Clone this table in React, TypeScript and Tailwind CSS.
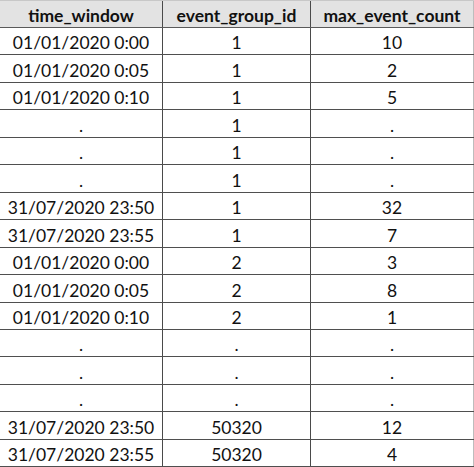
import React from 'react';

type Row = [string, string, string];

const rows: Row[] = [
  ['01/01/2020 0:00', '1', '10'],
  ['01/01/2020 0:05', '1', '2'],
  ['01/01/2020 0:10', '1', '5'],
  ['.', '1', '.'],
  ['.', '1', '.'],
  ['.', '1', '.'],
  ['31/07/2020 23:50', '1', '32'],
  ['31/07/2020 23:55', '1', '7'],
  ['01/01/2020 0:00', '2', '3'],
  ['01/01/2020 0:05', '2', '8'],
  ['01/01/2020 0:10', '2', '1'],
  ['.', '.', '.'],
  ['.', '.', '.'],
  ['.', '.', '.'],
  ['31/07/2020 23:50', '50320', '12'],
  ['31/07/2020 23:55', '50320', '4'],
];

const heights = [
  'h-[27px]', 'h-[28px]', 'h-[27px]', 'h-[28px]', 'h-[27px]', 'h-[28px]', 'h-[27px]', 'h-[28px]',
  'h-[27px]', 'h-[28px]', 'h-[27px]', 'h-[27px]', 'h-[28px]', 'h-[27px]', 'h-[28px]', 'h-[27px]',
];

const cell = 'flex items-end justify-center pb-[3px] border-r border-[#4a4a4a]';

const App: React.FC = () => {
  return (
    <div className="w-[474px] h-[467px] bg-white overflow-hidden text-[#111] font-['Lato','Liberation_Sans',sans-serif] text-[17.5px] leading-none">
      <div className="grid grid-cols-[163px_148px_163px] h-[28px] bg-[#e3e3e3] border-t border-[#c8c8c8] border-b border-b-[#5a5a5a] font-bold">
        <div className={cell}>time_window</div>
        <div className={cell}>event_group_id</div>
        <div className={cell + ' border-r-[#bdbdbd]'}>max_event_count</div>
      </div>
      {rows.map((r, i) => (
        <div key={i} className={`grid grid-cols-[163px_148px_163px] border-b border-[#4f4f4f] ${heights[i]}`}>
          <div className={cell}>{r[0]}</div>
          <div className={cell}>{r[1]}</div>
          <div className={cell + ' border-r-[#bdbdbd]'}>{r[2]}</div>
        </div>
      ))}
    </div>
  );
};

export default App;
